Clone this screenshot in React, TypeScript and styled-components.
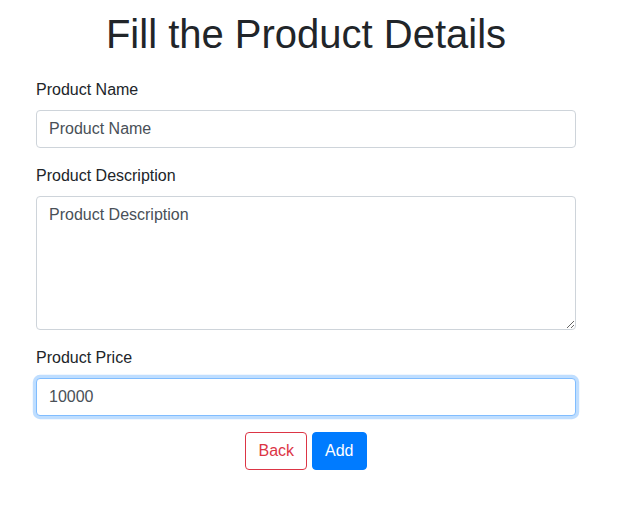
import React from "react";
import styled, { createGlobalStyle } from "styled-components";

const Global = createGlobalStyle`
  html, body { margin: 0; padding: 0; background: #fff; }
  body {
    font-family: "Liberation Sans", Arial, sans-serif;
    font-size: 16px;
    line-height: 1.5;
    color: #212529;
  }
  * { box-sizing: border-box; }
`;

const Page = styled.div`
  padding: 10px 0 0 36px;
  width: 576px;
`;

const Title = styled.h1`
  margin: 0 0 20px;
  font-size: 40px;
  line-height: 1.2;
  text-align: center;
  font-weight: 400;
`;

const Group = styled.div`
  margin-bottom: 16px;
`;

const Label = styled.label`
  display: block;
  margin-bottom: 8px;
`;

const fieldCss = `
  display: block;
  width: 100%;
  padding: 6px 12px;
  font-family: "Liberation Sans", Arial, sans-serif;
  font-size: 16px;
  line-height: 1.5;
  color: #495057;
  background: #fff;
  border: 1px solid #ced4da;
  border-radius: 4px;
  outline: none;
  &::placeholder { color: #495057; opacity: 1; }
`;

const Input = styled.input<{ $focused?: boolean }>`
  ${fieldCss}
  height: 38px;
  ${(p) =>
    p.$focused
      ? `border-color: #80bdff; box-shadow: 0 0 0 3.2px rgba(0,123,255,.25);`
      : ""}
`;

const TextArea = styled.textarea`
  ${fieldCss}
  height: 134px;
  resize: vertical;
`;

const Actions = styled.div`
  display: flex;
  justify-content: center;
  gap: 5px;
`;

const Button = styled.button<{ $variant: "danger" | "primary" }>`
  font-family: "Liberation Sans", Arial, sans-serif;
  font-size: 16px;
  line-height: 1.5;
  padding: 6px 12px;
  border-radius: 4px;
  cursor: pointer;
  border: 1px solid ${(p) => (p.$variant === "danger" ? "#dc3545" : "#007bff")};
  color: ${(p) => (p.$variant === "danger" ? "#dc3545" : "#fff")};
  background: ${(p) => (p.$variant === "danger" ? "transparent" : "#007bff")};
`;

export default function App() {
  return (
    <>
      <Global />
      <Page>
        <Title>Fill the Product Details</Title>
        <Group>
          <Label>Product Name</Label>
          <Input placeholder="Product Name" />
        </Group>
        <Group>
          <Label>Product Description</Label>
          <TextArea placeholder="Product Description" />
        </Group>
        <Group>
          <Label>Product Price</Label>
          <Input $focused defaultValue="10000" autoFocus />
        </Group>
        <Actions>
          <Button $variant="danger">Back</Button>
          <Button $variant="primary">Add</Button>
        </Actions>
      </Page>
    </>
  );
}
